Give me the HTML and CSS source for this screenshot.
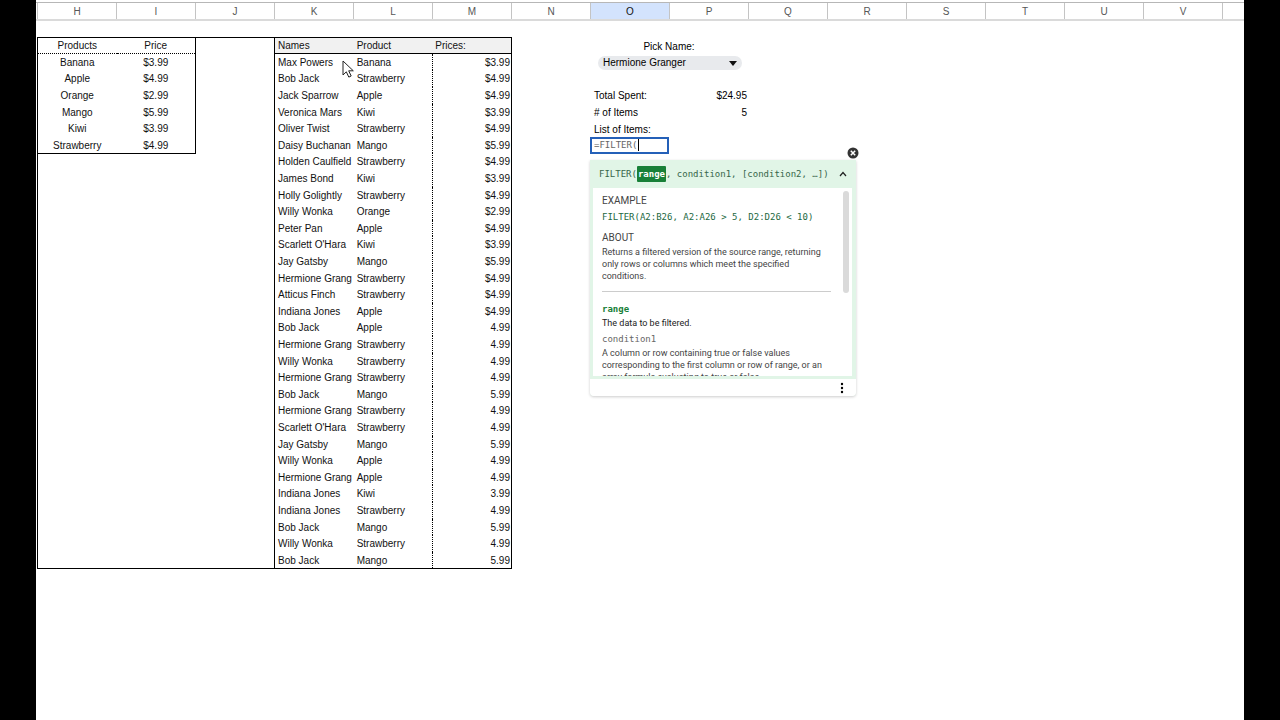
FILE: index.html
```html
<!DOCTYPE html>
<html lang="en">
<head>
<meta charset="utf-8">
<title>Spreadsheet</title>
<link rel="stylesheet" href="styles.css">
</head>
<body>
<main class="sheet">
  <div class="columns">
    <span>H</span><span>I</span><span>J</span><span>K</span><span>L</span><span>M</span><span>N</span><span class="active">O</span><span>P</span><span>Q</span><span>R</span><span>S</span><span>T</span><span>U</span><span>V</span><span></span>
  </div>
  <div class="canvas">
    <div class="ledger">
      <table class="cells products">
        <thead><tr><th>Products</th><th>Price</th></tr></thead>
        <tbody>
          <tr><td>Banana</td><td>$3.99</td></tr>
          <tr><td>Apple</td><td>$4.99</td></tr>
          <tr><td>Orange</td><td>$2.99</td></tr>
          <tr><td>Mango</td><td>$5.99</td></tr>
          <tr><td>Kiwi</td><td>$3.99</td></tr>
          <tr><td>Strawberry</td><td>$4.99</td></tr>
        </tbody>
      </table>
      <table class="cells orders">
        <thead><tr><th>Names</th><th>Product</th><th>Prices:</th></tr></thead>
        <tbody>
          <tr><td>Max Powers</td><td>Banana</td><td>$3.99</td></tr>
          <tr><td>Bob Jack</td><td>Strawberry</td><td>$4.99</td></tr>
          <tr><td>Jack Sparrow</td><td>Apple</td><td>$4.99</td></tr>
          <tr><td>Veronica Mars</td><td>Kiwi</td><td>$3.99</td></tr>
          <tr><td>Oliver Twist</td><td>Strawberry</td><td>$4.99</td></tr>
          <tr><td>Daisy Buchanan</td><td>Mango</td><td>$5.99</td></tr>
          <tr><td>Holden Caulfield</td><td>Strawberry</td><td>$4.99</td></tr>
          <tr><td>James Bond</td><td>Kiwi</td><td>$3.99</td></tr>
          <tr><td>Holly Golightly</td><td>Strawberry</td><td>$4.99</td></tr>
          <tr><td>Willy Wonka</td><td>Orange</td><td>$2.99</td></tr>
          <tr><td>Peter Pan</td><td>Apple</td><td>$4.99</td></tr>
          <tr><td>Scarlett O'Hara</td><td>Kiwi</td><td>$3.99</td></tr>
          <tr><td>Jay Gatsby</td><td>Mango</td><td>$5.99</td></tr>
          <tr><td>Hermione Grang</td><td>Strawberry</td><td>$4.99</td></tr>
          <tr><td>Atticus Finch</td><td>Strawberry</td><td>$4.99</td></tr>
          <tr><td>Indiana Jones</td><td>Apple</td><td>$4.99</td></tr>
          <tr><td>Bob Jack</td><td>Apple</td><td>4.99</td></tr>
          <tr><td>Hermione Grang</td><td>Strawberry</td><td>4.99</td></tr>
          <tr><td>Willy Wonka</td><td>Strawberry</td><td>4.99</td></tr>
          <tr><td>Hermione Grang</td><td>Strawberry</td><td>4.99</td></tr>
          <tr><td>Bob Jack</td><td>Mango</td><td>5.99</td></tr>
          <tr><td>Hermione Grang</td><td>Strawberry</td><td>4.99</td></tr>
          <tr><td>Scarlett O'Hara</td><td>Strawberry</td><td>4.99</td></tr>
          <tr><td>Jay Gatsby</td><td>Mango</td><td>5.99</td></tr>
          <tr><td>Willy Wonka</td><td>Apple</td><td>4.99</td></tr>
          <tr><td>Hermione Grang</td><td>Apple</td><td>4.99</td></tr>
          <tr><td>Indiana Jones</td><td>Kiwi</td><td>3.99</td></tr>
          <tr><td>Indiana Jones</td><td>Strawberry</td><td>4.99</td></tr>
          <tr><td>Bob Jack</td><td>Mango</td><td>5.99</td></tr>
          <tr><td>Willy Wonka</td><td>Strawberry</td><td>4.99</td></tr>
          <tr><td>Bob Jack</td><td>Mango</td><td>5.99</td></tr>
        </tbody>
      </table>
      <svg class="pointer" viewBox="0 0 12 18" width="12" height="18" aria-hidden="true"><path d="M1 1v14l3.300-3.200 2.500 5.300 2.400-1.100-2.500-5.200h4.600z" fill="#fff" stroke="#222" stroke-width="1"/></svg>
    </div>
    <section class="summary">
      <label class="pick" for="name">Pick Name:</label>
      <div class="chip">
        <select id="name"><option>Hermione Granger</option></select>
        <svg class="arrow" viewBox="0 0 8 5" width="8" height="5" aria-hidden="true"><path d="M0 0h8L4 5z" fill="#111"/></svg>
      </div>
      <div class="line total"><span>Total Spent:</span><span>$24.95</span></div>
      <div class="line"><span># of Items</span><span>5</span></div>
      <label class="line" for="formula">List of Items:</label>
      <div class="editor">
        <input id="formula" type="text" value="=FILTER(">
        <span class="caret"></span>
        <aside class="help">
          <button class="close" aria-label="Close"><svg viewBox="0 0 12 12" width="12" height="12"><circle cx="6" cy="6" r="5.500" fill="#333"/><path d="M3.800 3.800l4.400 4.400M8.200 3.800L3.800 8.200" stroke="#fff" stroke-width="1.500"/></svg></button>
          <div class="signature">
            <code>FILTER(<b>range</b>, condition1, [condition2, …])</code>
            <button class="toggle" aria-label="Collapse"><svg viewBox="0 0 8 6" width="8" height="6"><path d="M1 5l3-3.500L7 5" fill="none" stroke="#222" stroke-width="1.200"/></svg></button>
          </div>
          <div class="details">
            <div class="text">
              <h2>EXAMPLE</h2>
              <code class="example">FILTER(A2:B26, A2:A26 &gt; 5, D2:D26 &lt; 10)</code>
              <h2>ABOUT</h2>
              <p>Returns a filtered version of the source range, returning only rows or columns which meet the specified conditions.</p>
              <hr>
              <h3 class="current">range</h3>
              <p class="dark">The data to be filtered.</p>
              <h3>condition1</h3>
              <p>A column or row containing true or false values corresponding to the first column or row of range, or an array formula evaluating to true or false.</p>
            </div>
            <div class="thumb"></div>
          </div>
          <div class="foot">
            <button class="more" aria-label="More options"><svg viewBox="0 0 4 12" width="4" height="12"><circle cx="2" cy="2" r="1.200"/><circle cx="2" cy="6" r="1.200"/><circle cx="2" cy="10" r="1.200"/></svg></button>
          </div>
        </aside>
      </div>
    </section>
  </div>
</main>
</body>
</html>
```
FILE: styles.css
```css
* { box-sizing: border-box; }

body {
  margin: 0;
  padding: 0 36px;
  background: #000;
  color: #111;
  font: 10px/14px "Liberation Sans", Arial, sans-serif;
}

button {
  display: flex;
  padding: 0;
  border: 0;
  background: none;
}

.sheet {
  min-height: 100vh;
  padding: 2px 0 0;
  background: #fff;
  overflow: hidden;
}

/* Column letters */
.columns {
  display: grid;
  grid-template-columns: repeat(16, 79px);
  height: 19px;
  padding-left: 1px;
  border-top: 1px solid #b7b7b7;
  border-bottom: 2px solid #dadada;
  overflow: hidden;
  color: #575757;
  line-height: 17px;
  text-align: center;
}

.columns span { border-left: 1px solid #c4c4c4; }

.columns .active {
  background: #d3e3fd;
  color: #111;
}

.canvas {
  display: flex;
  align-items: flex-start;
  gap: 78px;
  padding: 16px 0 0 1px;
}

/* Bordered data ranges */
.ledger {
  position: relative;
  display: flex;
  align-items: flex-start;
  gap: 78px;
  border: 1px solid #000;
}

.cells {
  table-layout: fixed;
  border-spacing: 0;
}

.cells th,
.cells td {
  height: 17px;
  padding: 1px 2px 0;
  overflow: hidden;
  font-weight: 400;
  line-height: 14px;
  white-space: nowrap;
}

.cells th,
.cells tr:nth-child(5n+1) td,
.cells tr:nth-child(5n+4) td { height: 16px; }

.products {
  width: 158px;
  border-right: 1px solid #000;
  border-bottom: 1px solid #000;
  text-align: center;
}

.products th { border-bottom: 1px dotted #000; }

.orders {
  width: 237px;
  border-left: 1px solid #000;
  text-align: left;
}

.orders th {
  border-bottom: 1px solid #000;
  background: #f1f1f1;
}

.orders th,
.orders td { padding-left: 3px; }

.orders td:last-child {
  padding-right: 1px;
  border-left: 1px dotted #000;
  text-align: right;
}

.pointer {
  position: absolute;
  top: 22px;
  left: 304px;
}

/* Totals beside the ranges */
.summary {
  display: flex;
  flex-direction: column;
  width: 158px;
  padding-top: 1px;
  color: #000;
}

.pick {
  height: 17px;
  line-height: 17px;
  text-align: center;
}

.chip {
  position: relative;
  width: 144px;
  height: 14px;
  margin: 1px 0 0 8px;
}

.chip select {
  display: block;
  width: 100%;
  height: 14px;
  padding: 0 5px;
  border: 0;
  border-radius: 7px;
  appearance: none;
  background: #e8eaed;
  color: #000;
  font: inherit;
}

.arrow {
  position: absolute;
  top: 5px;
  right: 5px;
  pointer-events: none;
}

.line {
  display: flex;
  justify-content: space-between;
  height: 17px;
  padding: 0 1px 0 4px;
  line-height: 17px;
}

.total { margin-top: 17px; }

.editor {
  position: relative;
  width: 79px;
  height: 17px;
  margin-top: -1px;
}

.editor input {
  display: block;
  width: 100%;
  height: 17px;
  padding: 0 2px 2px;
  border: 2px solid #2460b8;
  outline: 0;
  background: #fff;
  color: #666;
  font: 9px/11px "DejaVu Sans Mono", monospace;
}

.caret {
  position: absolute;
  top: 2px;
  left: 48px;
  width: 1px;
  height: 12px;
  background: #000;
}

/* Function help card */
.help {
  position: absolute;
  top: 23px;
  left: 0;
  width: 266px;
  border-radius: 0 0 4px 4px;
  background: #e1f5e7;
  box-shadow: 0 1px 3px rgba(0, 0, 0, 0.2);
}

.help code {
  color: #37664a;
  font: 9px/12px "DejaVu Sans Mono", monospace;
  white-space: nowrap;
}

.close {
  position: absolute;
  top: -13px;
  right: -3px;
}

.signature {
  display: flex;
  align-items: center;
  justify-content: space-between;
  height: 28px;
  padding: 0 9px;
}

.signature b {
  padding: 3px 1px;
  border-radius: 1px;
  background: #188038;
  color: #fff;
}

.details {
  display: flex;
  justify-content: space-between;
  height: 188px;
  margin: 0 4px 0 3px;
  padding: 3px 3px 0 9px;
  overflow: hidden;
  background: #fff;
}

.text {
  width: 229px;
  padding-top: 4px;
  color: #444;
  font: 9px/12px Roboto, sans-serif;
}

.text h2,
.text h3,
.text p {
  margin: 0;
  font-weight: 400;
}

.text h2 { font-size: 10px; }

.text .example {
  display: block;
  margin: 4px 0 9px;
  color: #24693f;
}

.text p { margin-top: 2px; }

.text .dark { color: #222; }

.text hr {
  height: 1px;
  margin: 9px 0 11px;
  border: 0;
  background: #ccc;
}

.text h3 {
  margin-top: 4px;
  color: #666;
  font: 9px/12px "DejaVu Sans Mono", monospace;
}

.text .current {
  color: #188038;
  font-weight: 700;
}

.thumb {
  width: 6px;
  height: 102px;
  border-radius: 3px;
  background: #dadada;
}

.foot {
  display: flex;
  justify-content: flex-end;
  margin-top: 3px;
  padding: 3px 12px 2px;
  border-radius: 0 0 4px 4px;
  background: #fff;
}
```
